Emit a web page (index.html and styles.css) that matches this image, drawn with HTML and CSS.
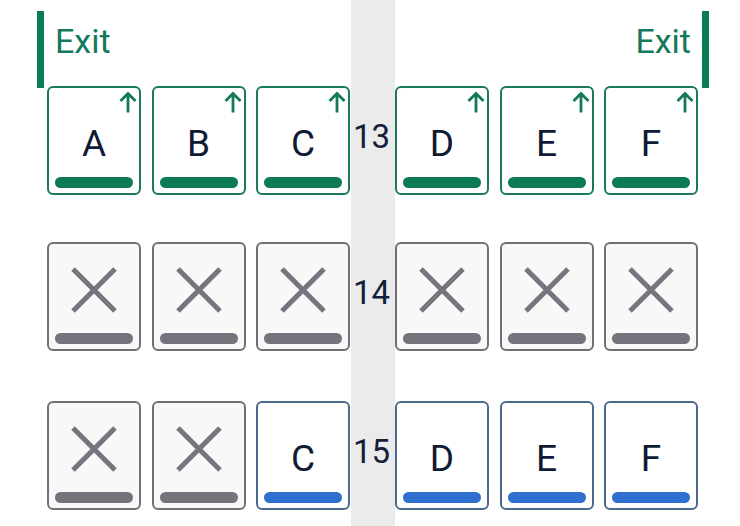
FILE: index.html
```html
<!DOCTYPE html>
<html lang="en">
<head>
<meta charset="utf-8">
<title>Seat map</title>
<link rel="stylesheet" href="styles.css">
</head>
<body>
<div class="cabin">
  <div class="aisle"></div>

  <div class="exit exit-left"><span class="exit-bar"></span><span class="exit-text">Exit</span></div>
  <div class="exit exit-right"><span class="exit-text">Exit</span><span class="exit-bar"></span></div>

  <!-- Row 13 -->
  <div class="group group-left row-1">
    <div class="seat seat-exit"><svg class="arrow" viewBox="0 0 18 22"><path d="M9 21.5V2.5M1.5 10L9 2.5L16.5 10"/></svg><span class="letter">A</span><span class="bar"></span></div>
    <div class="seat seat-exit"><svg class="arrow" viewBox="0 0 18 22"><path d="M9 21.5V2.5M1.5 10L9 2.5L16.5 10"/></svg><span class="letter">B</span><span class="bar"></span></div>
    <div class="seat seat-exit"><svg class="arrow" viewBox="0 0 18 22"><path d="M9 21.5V2.5M1.5 10L9 2.5L16.5 10"/></svg><span class="letter">C</span><span class="bar"></span></div>
  </div>
  <div class="rownum row-1">13</div>
  <div class="group group-right row-1">
    <div class="seat seat-exit"><svg class="arrow" viewBox="0 0 18 22"><path d="M9 21.5V2.5M1.5 10L9 2.5L16.5 10"/></svg><span class="letter">D</span><span class="bar"></span></div>
    <div class="seat seat-exit"><svg class="arrow" viewBox="0 0 18 22"><path d="M9 21.5V2.5M1.5 10L9 2.5L16.5 10"/></svg><span class="letter">E</span><span class="bar"></span></div>
    <div class="seat seat-exit"><svg class="arrow" viewBox="0 0 18 22"><path d="M9 21.5V2.5M1.5 10L9 2.5L16.5 10"/></svg><span class="letter">F</span><span class="bar"></span></div>
  </div>

  <!-- Row 14 -->
  <div class="group group-left row-2">
    <div class="seat seat-taken"><svg class="cross" viewBox="0 0 46 46"><path d="M2 2L44 44M44 2L2 44"/></svg><span class="bar"></span></div>
    <div class="seat seat-taken"><svg class="cross" viewBox="0 0 46 46"><path d="M2 2L44 44M44 2L2 44"/></svg><span class="bar"></span></div>
    <div class="seat seat-taken"><svg class="cross" viewBox="0 0 46 46"><path d="M2 2L44 44M44 2L2 44"/></svg><span class="bar"></span></div>
  </div>
  <div class="rownum row-2">14</div>
  <div class="group group-right row-2">
    <div class="seat seat-taken"><svg class="cross" viewBox="0 0 46 46"><path d="M2 2L44 44M44 2L2 44"/></svg><span class="bar"></span></div>
    <div class="seat seat-taken"><svg class="cross" viewBox="0 0 46 46"><path d="M2 2L44 44M44 2L2 44"/></svg><span class="bar"></span></div>
    <div class="seat seat-taken"><svg class="cross" viewBox="0 0 46 46"><path d="M2 2L44 44M44 2L2 44"/></svg><span class="bar"></span></div>
  </div>

  <!-- Row 15 -->
  <div class="group group-left row-3">
    <div class="seat seat-taken"><svg class="cross" viewBox="0 0 46 46"><path d="M2 2L44 44M44 2L2 44"/></svg><span class="bar"></span></div>
    <div class="seat seat-taken"><svg class="cross" viewBox="0 0 46 46"><path d="M2 2L44 44M44 2L2 44"/></svg><span class="bar"></span></div>
    <div class="seat seat-free"><span class="letter">C</span><span class="bar"></span></div>
  </div>
  <div class="rownum row-3">15</div>
  <div class="group group-right row-3">
    <div class="seat seat-free"><span class="letter">D</span><span class="bar"></span></div>
    <div class="seat seat-free"><span class="letter">E</span><span class="bar"></span></div>
    <div class="seat seat-free"><span class="letter">F</span><span class="bar"></span></div>
  </div>
</div>
</body>
</html>
```

FILE: styles.css
```css
* { box-sizing: border-box; }

html, body {
  margin: 0;
  padding: 0;
  background: #ffffff;
}

body {
  font-family: Roboto, "Liberation Sans", Arial, sans-serif;
  color: #101b35;
}

.cabin {
  display: grid;
  grid-template-columns: 351px 44px 1fr;
  grid-template-rows: 86px 156px 159px 1fr;
  height: 526px;
  overflow: hidden;
}

.aisle {
  grid-column: 2;
  grid-row: 1 / -1;
  background: #ebebeb;
}

.exit {
  grid-row: 1;
  display: flex;
  align-items: flex-start;
  padding-top: 11px;
  height: 86px;
}

.exit-left {
  grid-column: 1;
  padding-left: 37px;
}

.exit-right {
  grid-column: 3;
  justify-content: flex-end;
  padding-right: 31px;
}

.exit-bar {
  flex: none;
  width: 7px;
  height: 77px;
  background: #0d7a56;
}

.exit-text {
  font-size: 34px;
  line-height: 1;
  color: #13795a;
  margin-top: 13px;
}

.exit-left .exit-text { margin-left: 11px; }
.exit-right .exit-text { margin-right: 11px; }

.row-1 { grid-row: 2; }
.row-2 { grid-row: 3; }
.row-3 { grid-row: 4; }

.group {
  display: flex;
  gap: 10.5px;
  align-items: flex-start;
}

.group-left {
  grid-column: 1;
  padding-left: 47px;
}

.group-right {
  grid-column: 3;
}

.rownum {
  grid-column: 2;
  text-align: center;
  font-size: 33px;
  line-height: 1;
  padding-top: 34px;
  padding-right: 3px;
  color: #14203b;
}

.seat {
  position: relative;
  width: 94px;
  height: 109px;
  border-radius: 6px;
  border: 2px solid #1b7a5b;
  background: #ffffff;
  display: flex;
  flex-direction: column;
  align-items: center;
}

.letter {
  display: block;
  margin-top: 37px;
  font-size: 37px;
  line-height: 1;
  color: #0f1a33;
}

.bar {
  display: block;
  width: 78px;
  height: 10.5px;
  border-radius: 6px;
  margin-top: auto;
  margin-bottom: 5.5px;
}

.seat-exit .bar { background: #0c7a55; }

.arrow {
  position: absolute;
  top: 3px;
  right: 2px;
  width: 18px;
  height: 22px;
  fill: none;
  stroke: #13795a;
  stroke-width: 2.8;
}

.seat-taken {
  border-color: #6f7078;
  background: #f8f8f9;
}

.seat-taken .bar { background: #73747c; }

.cross {
  display: block;
  margin-top: 23px;
  width: 46px;
  height: 46px;
  fill: none;
  stroke: #74757d;
  stroke-width: 5;
}

.seat-free {
  border-color: #4b6a8e;
}

.seat-free .bar { background: #2e6fcf; }
```
